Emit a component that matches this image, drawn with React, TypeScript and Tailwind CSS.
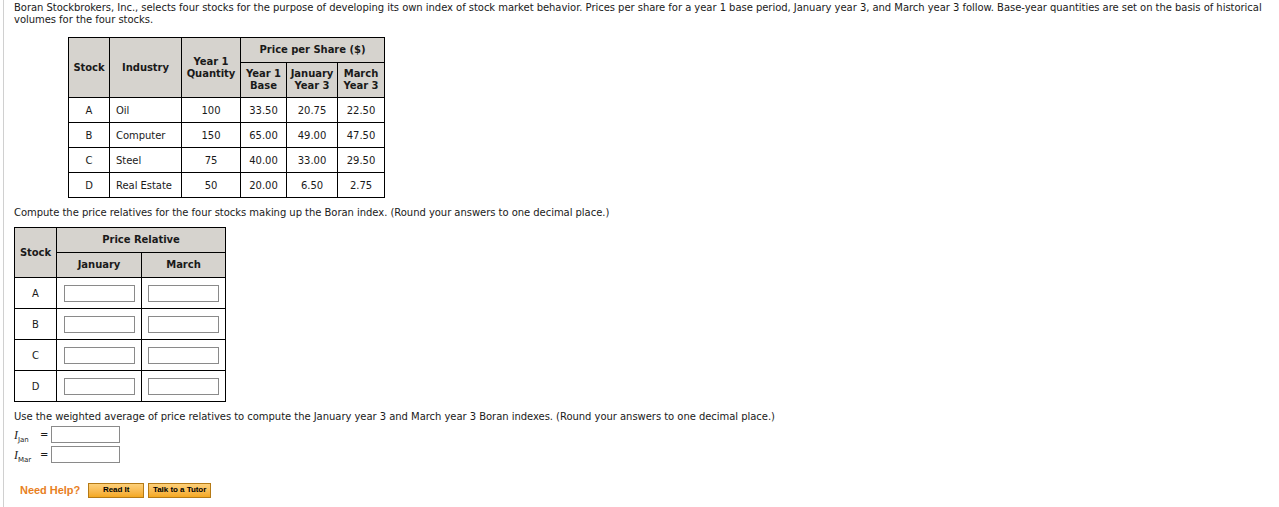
import React from "react";

const F = { fontFamily: '"DejaVu Sans", Verdana, sans-serif' };

function Inp({ w = 71, h = 17 }: { w?: number; h?: number }) {
  return (
    <div
      className="border border-[#8a8a8a] bg-white"
      style={{ width: w, height: h }}
    />
  );
}

export default function App() {
  const rows1 = [
    ["A", "Oil", "100", "33.50", "20.75", "22.50"],
    ["B", "Computer", "150", "65.00", "49.00", "47.50"],
    ["C", "Steel", "75", "40.00", "33.00", "29.50"],
    ["D", "Real Estate", "50", "20.00", "6.50", "2.75"],
  ];
  const th = "border border-black bg-[#d6d3ce] font-bold text-center p-0 leading-[12px]";
  const td = "border border-black p-0 text-center";
  return (
    <div className="w-[1279px] h-[507px] bg-white pl-[3px] overflow-hidden" style={F}>
      <div className="h-full border-l border-[#d0d0d0] pl-[10px] pt-[2px] text-[10px] text-[#1a1a1a] tracking-[-0.04px]">
        <p className="leading-[12px] pr-[4px]">
          Boran Stockbrokers, Inc., selects four stocks for the purpose of developing its own index of stock market behavior. Prices per share for a year 1 base period, January year 3, and March year 3 follow. Base-year quantities are set on the basis of historical volumes for the four stocks.
        </p>

        <table className="ml-[54px] mt-[11px] border-collapse table-fixed text-[10px]">
          <colgroup>
            <col style={{ width: 41 }} />
            <col style={{ width: 72 }} />
            <col style={{ width: 59 }} />
            <col style={{ width: 46 }} />
            <col style={{ width: 51 }} />
            <col style={{ width: 47 }} />
          </colgroup>
          <thead>
            <tr className="h-[25px]">
              <th rowSpan={2} className={th}>Stock</th>
              <th rowSpan={2} className={th}>Industry</th>
              <th rowSpan={2} className={th}>Year 1<br />Quantity</th>
              <th colSpan={3} className={th}>Price per Share ($)</th>
            </tr>
            <tr className="h-[35px]">
              <th className={th}>Year 1<br />Base</th>
              <th className={th}>January<br />Year 3</th>
              <th className={th}>March<br />Year 3</th>
            </tr>
          </thead>
          <tbody>
            {rows1.map((r) => (
              <tr key={r[0]} className="h-[25px]">
                <td className={td}>{r[0]}</td>
                <td className={td + " !text-left pl-[6px]"}>{r[1]}</td>
                <td className={td}>{r[2]}</td>
                <td className={td}>{r[3]}</td>
                <td className={td}>{r[4]}</td>
                <td className={td}>{r[5]}</td>
              </tr>
            ))}
          </tbody>
        </table>

        <p className="leading-[12px] mt-[9px]">
          Compute the price relatives for the four stocks making up the Boran index. (Round your answers to one decimal place.)
        </p>

        <table className="mt-[8px] border-collapse table-fixed text-[10px]">
          <colgroup>
            <col style={{ width: 42 }} />
            <col style={{ width: 85 }} />
            <col style={{ width: 84 }} />
          </colgroup>
          <thead>
            <tr className="h-[25px]">
              <th rowSpan={2} className={th}>Stock</th>
              <th colSpan={2} className={th}>Price Relative</th>
            </tr>
            <tr className="h-[25px]">
              <th className={th}>January</th>
              <th className={th}>March</th>
            </tr>
          </thead>
          <tbody>
            {["A", "B", "C", "D"].map((s) => (
              <tr key={s} className="h-[31px]">
                <td className={td}>{s}</td>
                <td className={td}>
                  <div className="flex justify-center"><Inp /></div>
                </td>
                <td className={td}>
                  <div className="flex justify-center"><Inp /></div>
                </td>
              </tr>
            ))}
          </tbody>
        </table>

        <p className="leading-[12px] mt-[9px]">
          Use the weighted average of price relatives to compute the January year 3 and March year 3 Boran indexes. (Round your answers to one decimal place.)
        </p>

        <div className="mt-[3px] flex flex-col gap-[3px]">
          {["Jan", "Mar"].map((m) => (
            <div key={m} className="flex items-center h-[17px]">
              <span className="w-[26px] flex items-end" style={{ fontFamily: '"Liberation Serif", serif' }}>
                <i className="text-[12px] leading-[12px]">I</i>
                <span className="text-[7px] leading-[7px] translate-y-[3px]" style={F}>{m}</span>
              </span>
              <span className="w-[11px] text-[10px]">=</span>
              <Inp w={69} h={17} />
            </div>
          ))}
        </div>

        <div className="mt-[19px] flex items-center pl-[6px]" style={{ fontFamily: '"Liberation Sans", Arial, sans-serif' }}>
          <span className="text-[11px] font-bold text-[#e8801e] mr-[8px]">Need Help?</span>
          <span className="h-[15px] w-[56px] flex items-center justify-center border border-[#b57a16] bg-gradient-to-b from-[#fdd079] to-[#f4a81d] text-[8px] font-bold text-black mr-[4px]">Read It</span>
          <span className="h-[15px] w-[63px] flex items-center justify-center border border-[#b57a16] bg-gradient-to-b from-[#fdd079] to-[#f4a81d] text-[8px] font-bold text-black">Talk to a Tutor</span>
        </div>
      </div>
    </div>
  );
}
